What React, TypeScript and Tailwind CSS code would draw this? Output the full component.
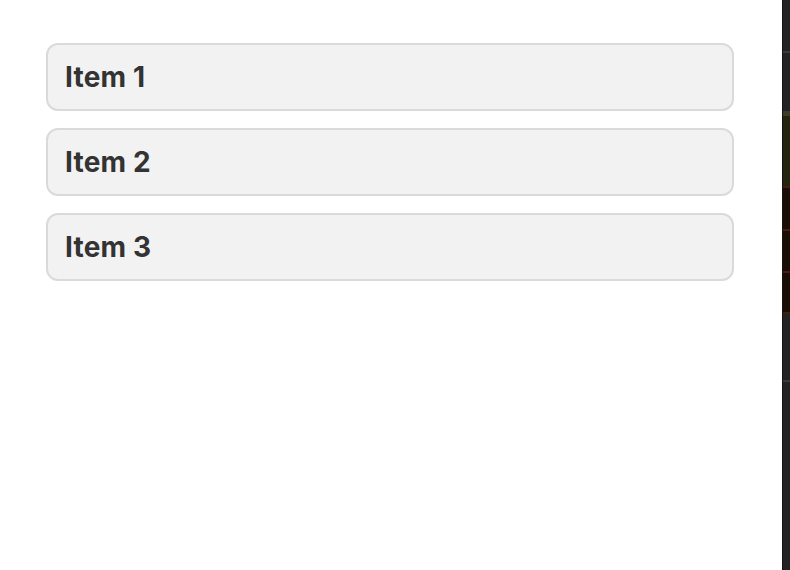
const items = ["Item 1", "Item 2", "Item 3"];

const App = () => {
  return (
    <div className="flex h-[570px] w-[790px] bg-white" style={{ fontFamily: "Inter, 'Liberation Sans', sans-serif" }}>
      <main className="flex-1 px-[46px] pt-[43px]">
        <div className="flex w-[688px] flex-col gap-[17px]">
          {items.map((item) => (
            <div
              key={item}
              className="flex h-[68px] items-center rounded-[12px] border-2 border-[#dadada] bg-[#f2f2f2] px-[17px]"
            >
              <span className="text-[28px] font-bold tracking-[0.2px] text-[#333333]">{item}</span>
            </div>
          ))}
        </div>
      </main>
      <aside className="flex w-[8px] flex-col border-l border-[#141414] bg-[#232323]">
        <div className="mt-[51px] h-[2px] bg-[#3a3a3a]" />
        <div className="mt-[58px] h-[3px] bg-[#3a3a3a]" />
        <div className="h-[72px] border-t-2 border-[#3f3f18] bg-[#25250f]" />
        <div className="h-[43px] border-t-2 border-[#4a1c10] bg-[#1a0d05]" />
        <div className="h-[42px] border-t-2 border-[#4a1c10] bg-[#1a0d05]" />
        <div className="h-[43px] border-y-2 border-[#4a1c10] bg-[#1a0d05]" />
        <div className="mt-[66px] h-[2px] bg-[#3a3a3a]" />
      </aside>
    </div>
  );
};

export default App;
